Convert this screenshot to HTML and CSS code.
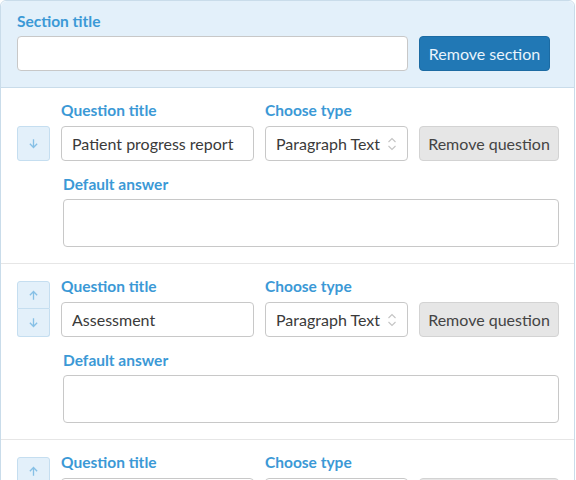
FILE: index.html
```html
<!DOCTYPE html>
<html>
<head>
<meta charset="utf-8">
<link rel="stylesheet" href="styles.css">
</head>
<body>
<div class="section">
  <div class="section-head">
    <div class="lbl">Section title</div>
    <div class="head-row">
      <input class="inp section-input" type="text">
      <button class="btn btn-primary">Remove section</button>
    </div>
  </div>

  <div class="question">
    <div class="q-row">
      <div class="arrows">
        <button class="arrow single"><svg width="11" height="11" viewBox="0 0 10 10"><path d="M5 1.2V8.6M1.7 5.3L5 8.6L8.3 5.3" fill="none" stroke="#86c0e6" stroke-width="1.2"/></svg></button>
      </div>
      <div class="field f-title">
        <div class="lbl">Question title</div>
        <input class="inp" type="text" value="Patient progress report">
      </div>
      <div class="field f-type">
        <div class="lbl">Choose type</div>
        <div class="inp select"><span>Paragraph Text</span><svg class="caret" width="10" height="16" viewBox="0 0 10 16"><path d="M1.5 6L5 2.5L8.5 6M1.5 10L5 13.5L8.5 10" fill="none" stroke="#c4c4c4" stroke-width="1.1"/></svg></div>
      </div>
      <button class="btn btn-default">Remove question</button>
    </div>
    <div class="answer">
      <div class="lbl">Default answer</div>
      <div class="inp textarea"></div>
    </div>
  </div>

  <div class="question">
    <div class="q-row">
      <div class="arrows">
        <button class="arrow top"><svg width="11" height="11" viewBox="0 0 10 10"><path d="M5 8.8V1.4M1.7 4.7L5 1.4L8.3 4.7" fill="none" stroke="#86c0e6" stroke-width="1.2"/></svg></button>
        <button class="arrow bottom"><svg width="11" height="11" viewBox="0 0 10 10"><path d="M5 1.2V8.6M1.7 5.3L5 8.6L8.3 5.3" fill="none" stroke="#86c0e6" stroke-width="1.2"/></svg></button>
      </div>
      <div class="field f-title">
        <div class="lbl">Question title</div>
        <input class="inp" type="text" value="Assessment">
      </div>
      <div class="field f-type">
        <div class="lbl">Choose type</div>
        <div class="inp select"><span>Paragraph Text</span><svg class="caret" width="10" height="16" viewBox="0 0 10 16"><path d="M1.5 6L5 2.5L8.5 6M1.5 10L5 13.5L8.5 10" fill="none" stroke="#c4c4c4" stroke-width="1.1"/></svg></div>
      </div>
      <button class="btn btn-default">Remove question</button>
    </div>
    <div class="answer">
      <div class="lbl">Default answer</div>
      <div class="inp textarea"></div>
    </div>
  </div>

  <div class="question">
    <div class="q-row">
      <div class="arrows">
        <button class="arrow top"><svg width="11" height="11" viewBox="0 0 10 10"><path d="M5 8.8V1.4M1.7 4.7L5 1.4L8.3 4.7" fill="none" stroke="#86c0e6" stroke-width="1.2"/></svg></button>
        <button class="arrow bottom"><svg width="11" height="11" viewBox="0 0 10 10"><path d="M5 1.2V8.6M1.7 5.3L5 8.6L8.3 5.3" fill="none" stroke="#86c0e6" stroke-width="1.2"/></svg></button>
      </div>
      <div class="field f-title">
        <div class="lbl">Question title</div>
        <input class="inp" type="text">
      </div>
      <div class="field f-type">
        <div class="lbl">Choose type</div>
        <div class="inp select"></div>
      </div>
      <button class="btn btn-default"></button>
    </div>
  </div>
</div>
</body>
</html>
```
FILE: styles.css
```css
html, body {
  margin: 0;
  padding: 0;
  background: #ffffff;
}
body {
  font-family: Lato, "Open Sans", sans-serif;
  color: #333333;
  width: 576px;
  height: 480px;
  overflow: hidden;
}
.section {
  width: 573px;
  border: 1px solid #c9dcea;
  border-radius: 6px;
  background: #ffffff;
}
.section-head {
  background: #e3f0fa;
  border-bottom: 1px solid #c9dcea;
  border-radius: 6px 6px 0 0;
  padding: 10px 16px 16px 16px;
}
.lbl {
  color: #3b99d6;
  font-weight: 700;
  font-size: 15.5px;
  line-height: 20px;
  height: 20px;
}
.section-head .lbl {
  margin-bottom: 5px;
}
.head-row {
  display: flex;
  gap: 11px;
}
.inp {
  box-sizing: border-box;
  height: 35px;
  border: 1px solid #c8c8c8;
  border-radius: 4px;
  background: #ffffff;
  font-family: inherit;
  font-size: 16px;
  color: #3a3a3a;
  padding: 0 10px;
  margin: 0;
  outline: none;
}
.section-input {
  width: 391px;
}
.btn {
  box-sizing: border-box;
  height: 35px;
  border-radius: 4px;
  font-family: inherit;
  font-size: 16px;
  margin: 0;
  padding: 0;
  cursor: pointer;
}
.btn-primary {
  width: 131px;
  background: #2178b5;
  border: 1px solid #1c6ba3;
  color: #e9f4fc;
}
.btn-default {
  width: 140px;
  background: #e6e6e6;
  border: 1px solid #d3d3d3;
  color: #444444;
}
.question {
  padding: 12px 15px 16px 16px;
  border-bottom: 1px solid #e6e6e6;
}
.q-row {
  display: flex;
  align-items: flex-end;
}
.arrows {
  width: 33px;
  margin-right: 11px;
  display: flex;
  flex-direction: column;
}
.arrow {
  box-sizing: border-box;
  width: 33px;
  margin: 0;
  padding: 0;
  background: #e3f0fa;
  border: 1px solid #c5def0;
  display: flex;
  align-items: center;
  justify-content: center;
}
.arrow.single {
  height: 35px;
  border-radius: 3px;
}
.arrow.top {
  height: 28px;
  border-radius: 3px 3px 0 0;
  border-bottom: 1px solid #c5def0;
}
.arrow.bottom {
  height: 28px;
  border-radius: 0 0 3px 3px;
  border-top: none;
}
.field {
  display: flex;
  flex-direction: column;
  margin-right: 11px;
}
.field .lbl {
  margin-bottom: 6px;
}
.f-title {
  width: 193px;
}
.f-title .inp {
  width: 193px;
}
.f-type {
  width: 143px;
}
.select {
  width: 143px;
  display: flex;
  align-items: center;
  justify-content: space-between;
  padding: 0 10px 0 10px;
}
.caret {
  display: block;
}
.answer {
  margin-left: 46px;
  margin-top: 13px;
}
.answer .lbl {
  margin-bottom: 5px;
}
.textarea {
  width: 496px;
  height: 48px;
}
```
